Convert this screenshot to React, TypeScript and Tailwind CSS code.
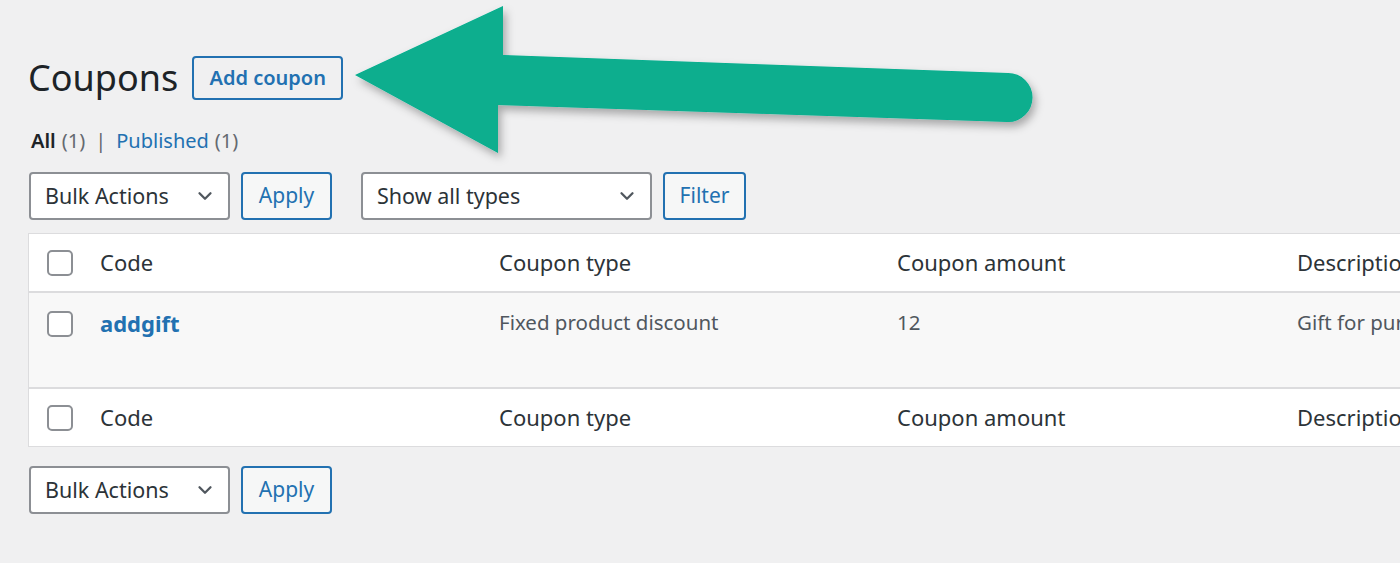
import { ChevronDown } from "lucide-react";

const font = { fontFamily: '"Noto Sans", "Open Sans", sans-serif' };

function Select({ label, width }: { label: string; width: string }) {
  return (
    <div
      className={`flex h-[48px] items-center justify-between rounded-[4px] border-2 border-[#8c8f94] bg-white pl-[14px] pr-[12px] text-[21.5px] text-[#2c3338] ${width}`}
    >
      <span>{label}</span>
      <ChevronDown className="h-[22px] w-[22px] text-[#50575e]" strokeWidth={2.5} />
    </div>
  );
}

function Button({ label, width }: { label: string; width: string }) {
  return (
    <div
      className={`flex h-[48px] items-center justify-center rounded-[4px] border-2 border-[#2271b1] bg-[#f6f7f7] text-[21px] text-[#2271b1] ${width}`}
    >
      {label}
    </div>
  );
}

function Checkbox() {
  return <div className="h-[26px] w-[26px] shrink-0 rounded-[5px] border-2 border-[#8c8f94] bg-white" />;
}

function HeadRow({ border }: { border: string }) {
  return (
    <div className={`flex h-[59px] items-center bg-white text-[22px] text-[#2c3338] ${border}`}>
      <div className="flex w-[470px] shrink-0 items-center gap-[27px] pl-[18px]">
        <Checkbox />
        <span>Code</span>
      </div>
      <div className="w-[398px] shrink-0">Coupon type</div>
      <div className="w-[400px] shrink-0">Coupon amount</div>
      <div className="whitespace-nowrap">Description</div>
    </div>
  );
}

export default function App() {
  return (
    <div className="relative h-[563px] w-[1400px] overflow-hidden bg-[#f0f0f1]" style={font}>
      <div className="flex flex-col pl-[28px] pt-[53px]">
        <div className="flex items-center gap-[14px]">
          <h1 className="text-[36px] leading-[50px] text-[#1d2327]">Coupons</h1>
          <div className="flex h-[44px] w-[151px] items-center justify-center rounded-[4px] border-2 border-[#2271b1] text-[20px] font-semibold text-[#2271b1]">
            Add coupon
          </div>
        </div>

        <div className="mt-[24px] flex items-center pl-[3px] text-[20px] leading-[28px] text-[#646970]">
          <span className="font-semibold text-[#1d2327]">All</span>
          <span className="ml-[6px]">(1)</span>
          <span className="mx-[10px]">|</span>
          <span className="text-[#2271b1]">Published</span>
          <span className="ml-[6px]">(1)</span>
        </div>

        <div className="mt-[17px] flex items-center pl-[1px]">
          <Select label="Bulk Actions" width="w-[201px]" />
          <div className="ml-[11px]">
            <Button label="Apply" width="w-[91px]" />
          </div>
          <div className="ml-[29px]">
            <Select label="Show all types" width="w-[291px]" />
          </div>
          <div className="ml-[11px]">
            <Button label="Filter" width="w-[83px]" />
          </div>
        </div>

        <div className="mt-[13px] w-[1400px] border border-r-0 border-[#dcdcde]">
          <HeadRow border="border-b-2 border-[#dcdcde]" />
          <div className="flex h-[94px] items-start bg-[#f8f8f8] pt-[14px] text-[20.5px] text-[#50575e]">
            <div className="flex w-[470px] shrink-0 items-center gap-[27px] pl-[18px] text-[22px]">
              <Checkbox />
              <span className="font-bold text-[#2271b1]">addgift</span>
            </div>
            <div className="w-[398px] shrink-0 leading-[30px]">Fixed product discount</div>
            <div className="w-[400px] shrink-0 leading-[30px]">12</div>
            <div className="whitespace-nowrap leading-[30px]">Gift for purchase</div>
          </div>
          <HeadRow border="border-t-2 border-[#dcdcde]" />
        </div>

        <div className="mt-[19px] flex items-center pl-[1px]">
          <Select label="Bulk Actions" width="w-[201px]" />
          <div className="ml-[11px]">
            <Button label="Apply" width="w-[91px]" />
          </div>
        </div>
      </div>

      <svg
        className="absolute left-[340px] top-0"
        width="720"
        height="175"
        viewBox="0 0 720 175"
      >
        <defs>
          <filter id="sh" x="-10%" y="-20%" width="120%" height="160%">
            <feDropShadow dx="3" dy="5" stdDeviation="4" floodColor="#000" floodOpacity="0.3" />
          </filter>
        </defs>
        <path
          d="M15 75 L163 6 L163 55 L668 73 A24.5 24.5 0 0 1 668 122 L158 105 L158 153 Z"
          fill="#07ae8e"
          filter="url(#sh)"
        />
      </svg>
    </div>
  );
}
